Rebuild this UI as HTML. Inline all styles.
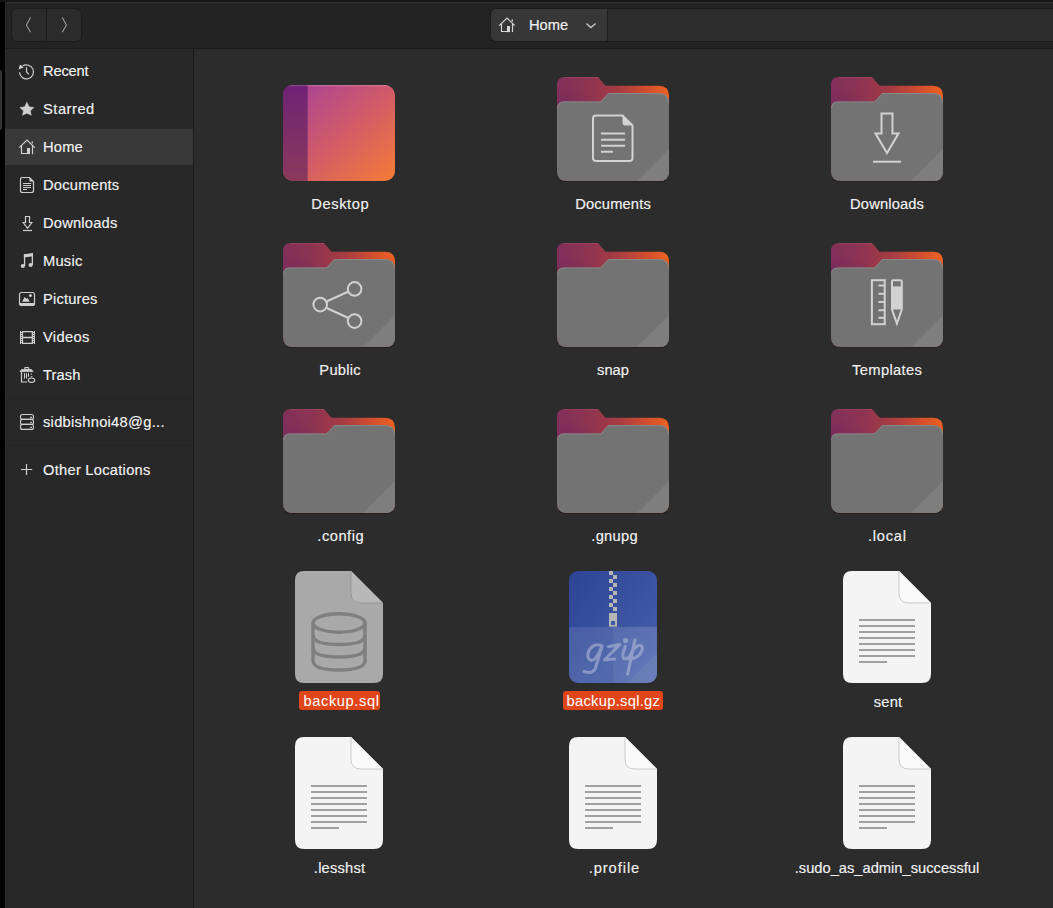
<!DOCTYPE html><html><head><meta charset="utf-8"><style>
*{margin:0;padding:0;box-sizing:border-box}
html,body{width:1053px;height:908px;overflow:hidden;background:#000;font-family:"Liberation Sans",sans-serif}
.a{position:absolute}
.t{position:absolute;white-space:nowrap;color:#f2f2f2;font-size:14.7px;line-height:20px;-webkit-text-stroke:0.15px #f2f2f2}
svg{position:absolute;overflow:visible}
</style></head><body><div class="a" style="left:0;top:0;width:1053px;height:2px;background:#161616"></div>
<div class="a" style="left:0;top:70px;width:2px;height:60px;background:#333;border-radius:0 2px 2px 0"></div>
<div class="a" style="left:5px;top:2px;width:1048px;height:1px;background:#2f2f2f"></div>
<div class="a" style="left:5px;top:3px;width:1048px;height:45px;background:#232323"></div>
<div class="a" style="left:5px;top:48px;width:1048px;height:1px;background:#191919"></div>
<div class="a" style="left:5px;top:49px;width:188px;height:859px;background:#282828"></div>
<div class="a" style="left:193px;top:49px;width:1px;height:859px;background:#1c1c1c"></div>
<div class="a" style="left:194px;top:49px;width:859px;height:859px;background:#2c2c2c"></div>
<div class="a" style="left:11px;top:8px;width:71px;height:34px;border:1px solid #1b1b1b;border-radius:6px;background:#2b2b2b"></div>
<div class="a" style="left:46px;top:9px;width:1px;height:32px;background:#1b1b1b"></div>
<svg style="left:0;top:0" width="100" height="48"><path d="M30.5 17.6 L26.4 25 L30.5 32.2" fill="none" stroke="#9c9c9c" stroke-width="1.1"/><path d="M62.3 17.6 L66.4 25 L62.3 32.2" fill="none" stroke="#9c9c9c" stroke-width="1.1"/></svg>
<div class="a" style="left:490px;top:8px;width:563px;height:34px;border-top:1px solid #1b1b1b;border-bottom:1px solid #1b1b1b;border-left:1px solid #1b1b1b;border-radius:6px 0 0 6px;background:#2d2d2d"></div>
<div class="a" style="left:491px;top:9px;width:116px;height:32px;border-radius:5px 0 0 5px;background:#373737"></div>
<div class="a" style="left:607px;top:9px;width:1px;height:32px;background:#1f1f1f"></div>
<svg style="left:497px;top:15px" width="20" height="20" viewBox="0 0 20 20"><path d="M2.2 10.6 L10 3 L17.8 10.6" fill="none" stroke="#d6d6d6" stroke-width="1.2"/><path d="M4.5 8.6 V16.5 H10.5" fill="none" stroke="#d6d6d6" stroke-width="1.2"/><rect x="10" y="11" width="3" height="6.1" fill="#d6d6d6"/><path d="M15.5 8.8 V17.1" stroke="#d6d6d6" stroke-width="1.2"/><path d="M15.3 4.6 V6.6" stroke="#d6d6d6" stroke-width="1.3"/></svg>
<div class="t" style="left:529px;top:15px;color:#f2f2f2">Home</div>
<svg style="left:0;top:0" width="620" height="48"><path d="M586.4 23.4 L590.9 27.6 L595.6 23.4" fill="none" stroke="#c8c8c8" stroke-width="1.3"/></svg>
<div class="a" style="left:5px;top:129px;width:188px;height:36px;background:#393939"></div>
<div class="a" style="left:5px;top:398px;width:188px;height:1px;background:#242424"></div>
<div class="a" style="left:5px;top:445px;width:188px;height:1px;background:#242424"></div>
<div class="t" style="left:43px;top:61px;letter-spacing:-0.18px">Recent</div>
<div class="t" style="left:43px;top:99px;letter-spacing:0.52px">Starred</div>
<div class="t" style="left:43px;top:137px;letter-spacing:0.20px">Home</div>
<div class="t" style="left:43px;top:175px;letter-spacing:0.24px">Documents</div>
<div class="t" style="left:43px;top:213px;letter-spacing:0.20px">Downloads</div>
<div class="t" style="left:43px;top:251px;letter-spacing:0.22px">Music</div>
<div class="t" style="left:43px;top:289px;letter-spacing:0.19px">Pictures</div>
<div class="t" style="left:43px;top:327px;letter-spacing:0.32px">Videos</div>
<div class="t" style="left:43px;top:365px;letter-spacing:0.08px">Trash</div>
<div class="t" style="left:43px;top:412px;letter-spacing:0.28px">sidbishnoi48@g...</div>
<div class="t" style="left:43px;top:460px;letter-spacing:0.26px">Other Locations</div>
<svg style="left:17px;top:61px" width="20" height="20" viewBox="0 0 20 20"><path d="M5.6 5.1 A7 7 0 1 1 2.5 11.3" fill="none" stroke="#cfcfcf" stroke-width="1.2"/><path d="M1.5 8.4 L3.0 3.5 L6.6 6.5 Z" fill="#cfcfcf"/><path d="M9.5 6.2 V11 L11.8 13.3" fill="none" stroke="#cfcfcf" stroke-width="1.2"/></svg>
<svg style="left:17px;top:99px" width="20" height="20" viewBox="0 0 20 20"><path d="M9.9 3.1 L12.1 7.7 L17.1 8.4 L13.4 11.8 L14.3 16.3 L9.9 14.2 L5.5 16.3 L6.4 11.8 L2.7 8.4 L7.7 7.7 Z" fill="#cfcfcf" stroke="#cfcfcf" stroke-width="0.4" stroke-linejoin="round"/></svg>
<svg style="left:17px;top:137px" width="20" height="20" viewBox="0 0 20 20"><path d="M2.2 10.6 L10 3 L17.8 10.6" fill="none" stroke="#cfcfcf" stroke-width="1.2"/><path d="M4.5 8.6 V16.5 H10.5" fill="none" stroke="#cfcfcf" stroke-width="1.2"/><rect x="10" y="11" width="3" height="6.1" fill="#cfcfcf"/><path d="M15.5 8.8 V17.1" stroke="#cfcfcf" stroke-width="1.2"/><path d="M15.3 4.6 V6.6" stroke="#cfcfcf" stroke-width="1.3"/></svg>
<svg style="left:17px;top:175px" width="20" height="20" viewBox="0 0 20 20"><path d="M5.5 2.5 H12.5 L16.5 6.5 V15.5 Q16.5 17.5 14.5 17.5 H5.5 Q3.5 17.5 3.5 15.5 V4.5 Q3.5 2.5 5.5 2.5 Z" fill="none" stroke="#cfcfcf" stroke-width="1.2"/><path d="M12.5 2.5 L16.5 6.5 H12.5 Z" fill="#cfcfcf"/><path d="M6 8.5 H14 M6 10.5 H14 M6 12.5 H14 M6 14.5 H10" stroke="#cfcfcf" stroke-width="1"/></svg>
<svg style="left:17px;top:213px" width="20" height="20" viewBox="0 0 20 20"><path d="M8.5 3.5 H12.5 V9.5 H14.8 L10.5 15.3 L6.2 9.5 H8.5 Z" fill="none" stroke="#cfcfcf" stroke-width="1.2"/><path d="M6 17.5 H15" stroke="#cfcfcf" stroke-width="1.2"/></svg>
<svg style="left:17px;top:251px" width="20" height="20" viewBox="0 0 20 20"><path d="M6.9 3.3 L16 2 V5.3 L6.9 6.5 Z" fill="#cfcfcf"/><rect x="6.9" y="3.3" width="1.3" height="11.7" fill="#cfcfcf"/><rect x="14.7" y="2" width="1.3" height="12" fill="#cfcfcf"/><circle cx="5.8" cy="15" r="2.1" fill="#cfcfcf"/><circle cx="13.6" cy="14" r="2.1" fill="#cfcfcf"/></svg>
<svg style="left:17px;top:289px" width="20" height="20" viewBox="0 0 20 20"><rect x="2.5" y="3.5" width="15" height="13" rx="2" fill="none" stroke="#cfcfcf" stroke-width="1.2"/><path d="M2.5 14 H17.5 V15 Q17.5 17 15.5 17 H4.5 Q2.5 17 2.5 15 Z" fill="#cfcfcf"/><path d="M5 12.8 L7.7 8 L9.4 9.8 L10.6 8.9 L12.9 12.8 Z" fill="#cfcfcf"/><circle cx="13.4" cy="6.5" r="1.5" fill="#cfcfcf"/></svg>
<svg style="left:17px;top:327px" width="20" height="20" viewBox="0 0 20 20"><path fill-rule="evenodd" d="M3 4 H18 V17 H3 Z M6.1 5.2 H14.7 V9.8 H6.1 Z M6.1 11.2 H14.7 V15.8 H6.1 Z" fill="#cfcfcf"/><circle cx="4.5" cy="6.5" r="0.55" fill="#282828"/><circle cx="16.5" cy="6.5" r="0.55" fill="#282828"/><circle cx="4.5" cy="8.5" r="0.55" fill="#282828"/><circle cx="16.5" cy="8.5" r="0.55" fill="#282828"/><circle cx="4.5" cy="10.5" r="0.55" fill="#282828"/><circle cx="16.5" cy="10.5" r="0.55" fill="#282828"/><circle cx="4.5" cy="12.5" r="0.55" fill="#282828"/><circle cx="16.5" cy="12.5" r="0.55" fill="#282828"/><circle cx="4.5" cy="14.5" r="0.55" fill="#282828"/><circle cx="16.5" cy="14.5" r="0.55" fill="#282828"/><rect x="4" y="4" width="1" height="0.9" fill="#282828"/><rect x="16" y="4" width="1" height="0.9" fill="#282828"/><rect x="4" y="16.1" width="1" height="0.9" fill="#282828"/><rect x="16" y="16.1" width="1" height="0.9" fill="#282828"/></svg>
<svg style="left:17px;top:365px" width="20" height="20" viewBox="0 0 20 20"><path d="M2.9 6.6 L4.5 4.6 H14.5 L16.1 6.6 Z" fill="#cfcfcf" stroke="#cfcfcf" stroke-width="0.8" stroke-linejoin="round"/><rect x="7.7" y="2.6" width="4.1" height="2.2" rx="0.9" fill="none" stroke="#cfcfcf" stroke-width="1.1"/><path d="M4.5 6.8 V17 H10" fill="none" stroke="#cfcfcf" stroke-width="1.2"/><path d="M7.5 8.2 V13.5 M9.5 8.2 V13.5 M11.5 8.2 V11.8 M14.4 8.4 V9.8" stroke="#cfcfcf" stroke-width="1.1"/><path d="M13.3 11.3 H15.8 L14.55 12.6 Z" fill="#cfcfcf"/><ellipse cx="14.5" cy="15.2" rx="3.2" ry="2.2" fill="none" stroke="#cfcfcf" stroke-width="1.1"/></svg>
<svg style="left:17px;top:412px" width="20" height="20" viewBox="0 0 20 20"><rect x="3.5" y="2.5" width="13" height="4.9" rx="2" fill="none" stroke="#cfcfcf" stroke-width="1.1"/><rect x="3.5" y="7.4" width="13" height="5" rx="2" fill="none" stroke="#cfcfcf" stroke-width="1.1"/><rect x="3.5" y="12.4" width="13" height="5" rx="2" fill="none" stroke="#cfcfcf" stroke-width="1.1"/><path d="M13.2 5.4 H14.9 M13.2 10.4 H14.9 M13.2 15.4 H14.9" stroke="#cfcfcf" stroke-width="1.1"/></svg>
<svg style="left:17px;top:460px" width="20" height="20" viewBox="0 0 20 20"><path d="M9.5 4 V15 M4 9.5 H15.2" stroke="#cfcfcf" stroke-width="1.2"/></svg>
<svg style="left:275px;top:65px" width="128" height="128" viewBox="0 0 128 128"><defs><linearGradient id="tabg" x1="0" y1="0" x2="1" y2="0"><stop offset="0" stop-color="#80305a"/><stop offset="0.3" stop-color="#8f3450"/><stop offset="0.55" stop-color="#a83c42"/><stop offset="0.8" stop-color="#d24e2e"/><stop offset="1" stop-color="#ee6222"/></linearGradient><radialGradient id="tabr" cx="0.1" cy="0.4" r="0.3"><stop offset="0" stop-color="#6e2462" stop-opacity="0.55"/><stop offset="1" stop-color="#6a2060" stop-opacity="0"/></radialGradient></defs><defs><linearGradient id="dskg" x1="0" y1="0" x2="1" y2="1"><stop offset="0" stop-color="#a3409d"/><stop offset="0.5" stop-color="#d05a6a"/><stop offset="1" stop-color="#f47c36"/></linearGradient><linearGradient id="dskl" x1="0" y1="0" x2="0" y2="1"><stop offset="0" stop-color="#6f2275"/><stop offset="1" stop-color="#8a3a5c"/></linearGradient><clipPath id="dskc"><rect x="8" y="20" width="112" height="96" rx="10"/></clipPath></defs><g clip-path="url(#dskc)"><rect x="8" y="20" width="112" height="96" fill="url(#dskg)"/><rect x="8" y="20" width="24.7" height="96" fill="url(#dskl)"/><rect x="8" y="20" width="112" height="1.2" fill="#ffffff" opacity="0.18"/></g></svg>
<div class="t" style="left:140.29px;top:194px;width:400px;text-align:center;letter-spacing:0.58px">Desktop</div>
<svg style="left:549px;top:65px" width="128" height="128" viewBox="0 0 128 128"><defs><linearGradient id="tabg" x1="0" y1="0" x2="1" y2="0"><stop offset="0" stop-color="#80305a"/><stop offset="0.3" stop-color="#8f3450"/><stop offset="0.55" stop-color="#a83c42"/><stop offset="0.8" stop-color="#d24e2e"/><stop offset="1" stop-color="#ee6222"/></linearGradient><radialGradient id="tabr" cx="0.1" cy="0.4" r="0.3"><stop offset="0" stop-color="#6e2462" stop-opacity="0.55"/><stop offset="1" stop-color="#6a2060" stop-opacity="0"/></radialGradient></defs><path d="M18 116.2 H110 Q116 116.2 118 114" fill="none" stroke="#141414" stroke-opacity="0.45" stroke-width="1.6"/><path d="M10 114 Q12 116.2 18 116.2" fill="none" stroke="#141414" stroke-opacity="0.45" stroke-width="1.6"/><path d="M16 12 H49 L56.5 20.7 H110 Q120 20.7 120 30.7 V106 Q120 116 110 116 H18 Q8 116 8 106 V20 Q8 12 16 12 Z" fill="url(#tabg)"/><path d="M16 12 H49 L56.5 20.7 H110 Q120 20.7 120 30.7 V106 Q120 116 110 116 H18 Q8 116 8 106 V20 Q8 12 16 12 Z" fill="url(#tabr)"/><path d="M15 12.5 H49" stroke="#d07090" stroke-opacity="0.22" stroke-width="1"/><path d="M15 36.4 H51.5 L59.3 28.1 H110 Q120 28.1 120 38.1 V106 Q120 116 110 116 H18 Q8 116 8 106 V43.4 Q8 36.4 15 36.4 Z" fill="#737373"/><path d="M120 84 V106 Q120 116 110 116 H88 Z" fill="#7e7e7e"/><path d="M16 115.6 H112" stroke="#9a7060" stroke-opacity="0.3" stroke-width="0.8"/><path d="M8.5 43 Q8.5 36.9 15 36.9 H51.7 L59.5 28.6 H110 Q119.5 28.6 119.5 38" fill="none" stroke="#9a9a9a" stroke-opacity="0.55" stroke-width="1"/><path d="M47 50.5 H73.5 L83.5 60.5 V93 Q83.5 96 80.5 96 H47 Q44 96 44 93 V53.5 Q44 50.5 47 50.5 Z" fill="none" stroke="#d2d2d2" stroke-width="2"/><path d="M73.5 50.5 L83.5 60.5 H76.5 Q73.5 60.5 73.5 57.5 Z" fill="#d2d2d2"/><path d="M52 68.6 H76 M52 74.7 H76 M52 80.8 H76 M52 86.8 H64" stroke="#d2d2d2" stroke-width="2"/></svg>
<div class="t" style="left:413.08px;top:194px;width:400px;text-align:center;letter-spacing:0.16px">Documents</div>
<svg style="left:823px;top:65px" width="128" height="128" viewBox="0 0 128 128"><defs><linearGradient id="tabg" x1="0" y1="0" x2="1" y2="0"><stop offset="0" stop-color="#80305a"/><stop offset="0.3" stop-color="#8f3450"/><stop offset="0.55" stop-color="#a83c42"/><stop offset="0.8" stop-color="#d24e2e"/><stop offset="1" stop-color="#ee6222"/></linearGradient><radialGradient id="tabr" cx="0.1" cy="0.4" r="0.3"><stop offset="0" stop-color="#6e2462" stop-opacity="0.55"/><stop offset="1" stop-color="#6a2060" stop-opacity="0"/></radialGradient></defs><path d="M18 116.2 H110 Q116 116.2 118 114" fill="none" stroke="#141414" stroke-opacity="0.45" stroke-width="1.6"/><path d="M10 114 Q12 116.2 18 116.2" fill="none" stroke="#141414" stroke-opacity="0.45" stroke-width="1.6"/><path d="M16 12 H49 L56.5 20.7 H110 Q120 20.7 120 30.7 V106 Q120 116 110 116 H18 Q8 116 8 106 V20 Q8 12 16 12 Z" fill="url(#tabg)"/><path d="M16 12 H49 L56.5 20.7 H110 Q120 20.7 120 30.7 V106 Q120 116 110 116 H18 Q8 116 8 106 V20 Q8 12 16 12 Z" fill="url(#tabr)"/><path d="M15 12.5 H49" stroke="#d07090" stroke-opacity="0.22" stroke-width="1"/><path d="M15 36.4 H51.5 L59.3 28.1 H110 Q120 28.1 120 38.1 V106 Q120 116 110 116 H18 Q8 116 8 106 V43.4 Q8 36.4 15 36.4 Z" fill="#737373"/><path d="M120 84 V106 Q120 116 110 116 H88 Z" fill="#7e7e7e"/><path d="M16 115.6 H112" stroke="#9a7060" stroke-opacity="0.3" stroke-width="0.8"/><path d="M8.5 43 Q8.5 36.9 15 36.9 H51.7 L59.5 28.6 H110 Q119.5 28.6 119.5 38" fill="none" stroke="#9a9a9a" stroke-opacity="0.55" stroke-width="1"/><path d="M58.5 48.5 H69.5 V68.5 H75.5 L64 88 L52.5 68.5 H58.5 Z" fill="none" stroke="#d2d2d2" stroke-width="2" stroke-linejoin="miter"/><path d="M50 96.7 H78" stroke="#d2d2d2" stroke-width="2"/></svg>
<div class="t" style="left:687.08px;top:194px;width:400px;text-align:center;letter-spacing:0.15px">Downloads</div>
<svg style="left:275px;top:231px" width="128" height="128" viewBox="0 0 128 128"><defs><linearGradient id="tabg" x1="0" y1="0" x2="1" y2="0"><stop offset="0" stop-color="#80305a"/><stop offset="0.3" stop-color="#8f3450"/><stop offset="0.55" stop-color="#a83c42"/><stop offset="0.8" stop-color="#d24e2e"/><stop offset="1" stop-color="#ee6222"/></linearGradient><radialGradient id="tabr" cx="0.1" cy="0.4" r="0.3"><stop offset="0" stop-color="#6e2462" stop-opacity="0.55"/><stop offset="1" stop-color="#6a2060" stop-opacity="0"/></radialGradient></defs><path d="M18 116.2 H110 Q116 116.2 118 114" fill="none" stroke="#141414" stroke-opacity="0.45" stroke-width="1.6"/><path d="M10 114 Q12 116.2 18 116.2" fill="none" stroke="#141414" stroke-opacity="0.45" stroke-width="1.6"/><path d="M16 12 H49 L56.5 20.7 H110 Q120 20.7 120 30.7 V106 Q120 116 110 116 H18 Q8 116 8 106 V20 Q8 12 16 12 Z" fill="url(#tabg)"/><path d="M16 12 H49 L56.5 20.7 H110 Q120 20.7 120 30.7 V106 Q120 116 110 116 H18 Q8 116 8 106 V20 Q8 12 16 12 Z" fill="url(#tabr)"/><path d="M15 12.5 H49" stroke="#d07090" stroke-opacity="0.22" stroke-width="1"/><path d="M15 36.4 H51.5 L59.3 28.1 H110 Q120 28.1 120 38.1 V106 Q120 116 110 116 H18 Q8 116 8 106 V43.4 Q8 36.4 15 36.4 Z" fill="#737373"/><path d="M120 84 V106 Q120 116 110 116 H88 Z" fill="#7e7e7e"/><path d="M16 115.6 H112" stroke="#9a7060" stroke-opacity="0.3" stroke-width="0.8"/><path d="M8.5 43 Q8.5 36.9 15 36.9 H51.7 L59.5 28.6 H110 Q119.5 28.6 119.5 38" fill="none" stroke="#9a9a9a" stroke-opacity="0.55" stroke-width="1"/><circle cx="45.2" cy="73.6" r="6.8" fill="none" stroke="#d2d2d2" stroke-width="2"/><circle cx="79.6" cy="57.9" r="6.8" fill="none" stroke="#d2d2d2" stroke-width="2"/><circle cx="79.6" cy="90.1" r="6.8" fill="none" stroke="#d2d2d2" stroke-width="2"/><path d="M51.5 70.5 L73.5 60.5 M51.5 77 L73.5 87" stroke="#d2d2d2" stroke-width="2"/></svg>
<div class="t" style="left:140.13px;top:360px;width:400px;text-align:center;letter-spacing:0.26px">Public</div>
<svg style="left:549px;top:231px" width="128" height="128" viewBox="0 0 128 128"><defs><linearGradient id="tabg" x1="0" y1="0" x2="1" y2="0"><stop offset="0" stop-color="#80305a"/><stop offset="0.3" stop-color="#8f3450"/><stop offset="0.55" stop-color="#a83c42"/><stop offset="0.8" stop-color="#d24e2e"/><stop offset="1" stop-color="#ee6222"/></linearGradient><radialGradient id="tabr" cx="0.1" cy="0.4" r="0.3"><stop offset="0" stop-color="#6e2462" stop-opacity="0.55"/><stop offset="1" stop-color="#6a2060" stop-opacity="0"/></radialGradient></defs><path d="M18 116.2 H110 Q116 116.2 118 114" fill="none" stroke="#141414" stroke-opacity="0.45" stroke-width="1.6"/><path d="M10 114 Q12 116.2 18 116.2" fill="none" stroke="#141414" stroke-opacity="0.45" stroke-width="1.6"/><path d="M16 12 H49 L56.5 20.7 H110 Q120 20.7 120 30.7 V106 Q120 116 110 116 H18 Q8 116 8 106 V20 Q8 12 16 12 Z" fill="url(#tabg)"/><path d="M16 12 H49 L56.5 20.7 H110 Q120 20.7 120 30.7 V106 Q120 116 110 116 H18 Q8 116 8 106 V20 Q8 12 16 12 Z" fill="url(#tabr)"/><path d="M15 12.5 H49" stroke="#d07090" stroke-opacity="0.22" stroke-width="1"/><path d="M15 36.4 H51.5 L59.3 28.1 H110 Q120 28.1 120 38.1 V106 Q120 116 110 116 H18 Q8 116 8 106 V43.4 Q8 36.4 15 36.4 Z" fill="#737373"/><path d="M120 84 V106 Q120 116 110 116 H88 Z" fill="#7e7e7e"/><path d="M16 115.6 H112" stroke="#9a7060" stroke-opacity="0.3" stroke-width="0.8"/><path d="M8.5 43 Q8.5 36.9 15 36.9 H51.7 L59.5 28.6 H110 Q119.5 28.6 119.5 38" fill="none" stroke="#9a9a9a" stroke-opacity="0.55" stroke-width="1"/></svg>
<div class="t" style="left:413.00px;top:360px;width:400px;text-align:center;letter-spacing:0.00px">snap</div>
<svg style="left:823px;top:231px" width="128" height="128" viewBox="0 0 128 128"><defs><linearGradient id="tabg" x1="0" y1="0" x2="1" y2="0"><stop offset="0" stop-color="#80305a"/><stop offset="0.3" stop-color="#8f3450"/><stop offset="0.55" stop-color="#a83c42"/><stop offset="0.8" stop-color="#d24e2e"/><stop offset="1" stop-color="#ee6222"/></linearGradient><radialGradient id="tabr" cx="0.1" cy="0.4" r="0.3"><stop offset="0" stop-color="#6e2462" stop-opacity="0.55"/><stop offset="1" stop-color="#6a2060" stop-opacity="0"/></radialGradient></defs><path d="M18 116.2 H110 Q116 116.2 118 114" fill="none" stroke="#141414" stroke-opacity="0.45" stroke-width="1.6"/><path d="M10 114 Q12 116.2 18 116.2" fill="none" stroke="#141414" stroke-opacity="0.45" stroke-width="1.6"/><path d="M16 12 H49 L56.5 20.7 H110 Q120 20.7 120 30.7 V106 Q120 116 110 116 H18 Q8 116 8 106 V20 Q8 12 16 12 Z" fill="url(#tabg)"/><path d="M16 12 H49 L56.5 20.7 H110 Q120 20.7 120 30.7 V106 Q120 116 110 116 H18 Q8 116 8 106 V20 Q8 12 16 12 Z" fill="url(#tabr)"/><path d="M15 12.5 H49" stroke="#d07090" stroke-opacity="0.22" stroke-width="1"/><path d="M15 36.4 H51.5 L59.3 28.1 H110 Q120 28.1 120 38.1 V106 Q120 116 110 116 H18 Q8 116 8 106 V43.4 Q8 36.4 15 36.4 Z" fill="#737373"/><path d="M120 84 V106 Q120 116 110 116 H88 Z" fill="#7e7e7e"/><path d="M16 115.6 H112" stroke="#9a7060" stroke-opacity="0.3" stroke-width="0.8"/><path d="M8.5 43 Q8.5 36.9 15 36.9 H51.7 L59.5 28.6 H110 Q119.5 28.6 119.5 38" fill="none" stroke="#9a9a9a" stroke-opacity="0.55" stroke-width="1"/><rect x="48.9" y="49.2" width="12.8" height="44" fill="none" stroke="#d2d2d2" stroke-width="2"/><path d="M55.5 54.6 H61 M55.5 62.8 H61 M55.5 71.1 H61 M55.5 79.3 H61 M55.5 86.8 H61" stroke="#d2d2d2" stroke-width="2"/><path d="M69 50.5 Q69 49.2 70.3 49.2 H77.5 Q78.8 49.2 78.8 50.5 V78.5 L73.9 92.5 L69 78.5 Z" fill="none" stroke="#d2d2d2" stroke-width="2"/><rect x="69" y="55.4" width="9.8" height="23.1" fill="#d2d2d2"/></svg>
<div class="t" style="left:687.18px;top:360px;width:400px;text-align:center;letter-spacing:0.36px">Templates</div>
<svg style="left:275px;top:397px" width="128" height="128" viewBox="0 0 128 128"><defs><linearGradient id="tabg" x1="0" y1="0" x2="1" y2="0"><stop offset="0" stop-color="#80305a"/><stop offset="0.3" stop-color="#8f3450"/><stop offset="0.55" stop-color="#a83c42"/><stop offset="0.8" stop-color="#d24e2e"/><stop offset="1" stop-color="#ee6222"/></linearGradient><radialGradient id="tabr" cx="0.1" cy="0.4" r="0.3"><stop offset="0" stop-color="#6e2462" stop-opacity="0.55"/><stop offset="1" stop-color="#6a2060" stop-opacity="0"/></radialGradient></defs><path d="M18 116.2 H110 Q116 116.2 118 114" fill="none" stroke="#141414" stroke-opacity="0.45" stroke-width="1.6"/><path d="M10 114 Q12 116.2 18 116.2" fill="none" stroke="#141414" stroke-opacity="0.45" stroke-width="1.6"/><path d="M16 12 H49 L56.5 20.7 H110 Q120 20.7 120 30.7 V106 Q120 116 110 116 H18 Q8 116 8 106 V20 Q8 12 16 12 Z" fill="url(#tabg)"/><path d="M16 12 H49 L56.5 20.7 H110 Q120 20.7 120 30.7 V106 Q120 116 110 116 H18 Q8 116 8 106 V20 Q8 12 16 12 Z" fill="url(#tabr)"/><path d="M15 12.5 H49" stroke="#d07090" stroke-opacity="0.22" stroke-width="1"/><path d="M15 36.4 H51.5 L59.3 28.1 H110 Q120 28.1 120 38.1 V106 Q120 116 110 116 H18 Q8 116 8 106 V43.4 Q8 36.4 15 36.4 Z" fill="#737373"/><path d="M120 84 V106 Q120 116 110 116 H88 Z" fill="#7e7e7e"/><path d="M16 115.6 H112" stroke="#9a7060" stroke-opacity="0.3" stroke-width="0.8"/><path d="M8.5 43 Q8.5 36.9 15 36.9 H51.7 L59.5 28.6 H110 Q119.5 28.6 119.5 38" fill="none" stroke="#9a9a9a" stroke-opacity="0.55" stroke-width="1"/></svg>
<div class="t" style="left:140.75px;top:526px;width:400px;text-align:center;letter-spacing:0.50px">.config</div>
<svg style="left:549px;top:397px" width="128" height="128" viewBox="0 0 128 128"><defs><linearGradient id="tabg" x1="0" y1="0" x2="1" y2="0"><stop offset="0" stop-color="#80305a"/><stop offset="0.3" stop-color="#8f3450"/><stop offset="0.55" stop-color="#a83c42"/><stop offset="0.8" stop-color="#d24e2e"/><stop offset="1" stop-color="#ee6222"/></linearGradient><radialGradient id="tabr" cx="0.1" cy="0.4" r="0.3"><stop offset="0" stop-color="#6e2462" stop-opacity="0.55"/><stop offset="1" stop-color="#6a2060" stop-opacity="0"/></radialGradient></defs><path d="M18 116.2 H110 Q116 116.2 118 114" fill="none" stroke="#141414" stroke-opacity="0.45" stroke-width="1.6"/><path d="M10 114 Q12 116.2 18 116.2" fill="none" stroke="#141414" stroke-opacity="0.45" stroke-width="1.6"/><path d="M16 12 H49 L56.5 20.7 H110 Q120 20.7 120 30.7 V106 Q120 116 110 116 H18 Q8 116 8 106 V20 Q8 12 16 12 Z" fill="url(#tabg)"/><path d="M16 12 H49 L56.5 20.7 H110 Q120 20.7 120 30.7 V106 Q120 116 110 116 H18 Q8 116 8 106 V20 Q8 12 16 12 Z" fill="url(#tabr)"/><path d="M15 12.5 H49" stroke="#d07090" stroke-opacity="0.22" stroke-width="1"/><path d="M15 36.4 H51.5 L59.3 28.1 H110 Q120 28.1 120 38.1 V106 Q120 116 110 116 H18 Q8 116 8 106 V43.4 Q8 36.4 15 36.4 Z" fill="#737373"/><path d="M120 84 V106 Q120 116 110 116 H88 Z" fill="#7e7e7e"/><path d="M16 115.6 H112" stroke="#9a7060" stroke-opacity="0.3" stroke-width="0.8"/><path d="M8.5 43 Q8.5 36.9 15 36.9 H51.7 L59.5 28.6 H110 Q119.5 28.6 119.5 38" fill="none" stroke="#9a9a9a" stroke-opacity="0.55" stroke-width="1"/></svg>
<div class="t" style="left:414.66px;top:526px;width:400px;text-align:center;letter-spacing:0.32px">.gnupg</div>
<svg style="left:823px;top:397px" width="128" height="128" viewBox="0 0 128 128"><defs><linearGradient id="tabg" x1="0" y1="0" x2="1" y2="0"><stop offset="0" stop-color="#80305a"/><stop offset="0.3" stop-color="#8f3450"/><stop offset="0.55" stop-color="#a83c42"/><stop offset="0.8" stop-color="#d24e2e"/><stop offset="1" stop-color="#ee6222"/></linearGradient><radialGradient id="tabr" cx="0.1" cy="0.4" r="0.3"><stop offset="0" stop-color="#6e2462" stop-opacity="0.55"/><stop offset="1" stop-color="#6a2060" stop-opacity="0"/></radialGradient></defs><path d="M18 116.2 H110 Q116 116.2 118 114" fill="none" stroke="#141414" stroke-opacity="0.45" stroke-width="1.6"/><path d="M10 114 Q12 116.2 18 116.2" fill="none" stroke="#141414" stroke-opacity="0.45" stroke-width="1.6"/><path d="M16 12 H49 L56.5 20.7 H110 Q120 20.7 120 30.7 V106 Q120 116 110 116 H18 Q8 116 8 106 V20 Q8 12 16 12 Z" fill="url(#tabg)"/><path d="M16 12 H49 L56.5 20.7 H110 Q120 20.7 120 30.7 V106 Q120 116 110 116 H18 Q8 116 8 106 V20 Q8 12 16 12 Z" fill="url(#tabr)"/><path d="M15 12.5 H49" stroke="#d07090" stroke-opacity="0.22" stroke-width="1"/><path d="M15 36.4 H51.5 L59.3 28.1 H110 Q120 28.1 120 38.1 V106 Q120 116 110 116 H18 Q8 116 8 106 V43.4 Q8 36.4 15 36.4 Z" fill="#737373"/><path d="M120 84 V106 Q120 116 110 116 H88 Z" fill="#7e7e7e"/><path d="M16 115.6 H112" stroke="#9a7060" stroke-opacity="0.3" stroke-width="0.8"/><path d="M8.5 43 Q8.5 36.9 15 36.9 H51.7 L59.5 28.6 H110 Q119.5 28.6 119.5 38" fill="none" stroke="#9a9a9a" stroke-opacity="0.55" stroke-width="1"/></svg>
<div class="t" style="left:687.38px;top:526px;width:400px;text-align:center;letter-spacing:0.76px">.local</div>
<svg style="left:275px;top:563px" width="128" height="128" viewBox="0 0 128 128"><path d="M29 8 H76 L108 40 V111 Q108 120 99 120 H29 Q20 120 20 111 V17 Q20 8 29 8 Z" fill="#a9a9a9"/><path d="M76 8 L108 40 H86 Q76 40 76 30 Z" fill="#b8b8b8"/><path d="M76 8.5 V30 Q76 40 86 40 H107.5" fill="none" stroke="#8a8a8a" stroke-opacity="0.7" stroke-width="0.9"/><ellipse cx="64" cy="60" rx="26" ry="9.2" fill="none" stroke="#7f7f7f" stroke-width="3.4"/><path d="M38 60 V97.5 Q38 107 64 107 Q90 107 90 97.5 V60" fill="none" stroke="#7f7f7f" stroke-width="3.4"/><path d="M38 72.3 Q38 81.5 64 81.5 Q90 81.5 90 72.3 M38 84.8 Q38 94 64 94 Q90 94 90 84.8" fill="none" stroke="#7f7f7f" stroke-width="3.4"/></svg>
<div class="a" style="left:299px;top:691px;width:81px;height:19px;background:#e1461a;border-radius:3px"></div>
<div class="a" style="left:303.5px;top:691px;height:19px;line-height:21px;color:#fff;font-size:14.7px;white-space:nowrap;letter-spacing:0.58px">backup.sql</div>
<svg style="left:549px;top:563px" width="128" height="128" viewBox="0 0 128 128"><defs><linearGradient id="gzg" x1="0" y1="0" x2="1" y2="1"><stop offset="0" stop-color="#2b4495"/><stop offset="1" stop-color="#4a62ab"/></linearGradient><clipPath id="gzc"><rect x="20" y="8" width="88" height="112" rx="9"/></clipPath></defs><g clip-path="url(#gzc)"><rect x="20" y="8" width="88" height="112" fill="url(#gzg)"/><rect x="20" y="64" width="88" height="56" fill="#ffffff" opacity="0.1"/><rect x="64" y="64" width="44" height="56" fill="#ffffff" opacity="0.05"/><path d="M108 90 V120 H78 Z" fill="#fff" opacity="0.05"/></g><rect x="60" y="8" width="4" height="4" fill="#b5b5b5"/><rect x="60" y="16" width="4" height="4" fill="#b5b5b5"/><rect x="60" y="24" width="4" height="4" fill="#b5b5b5"/><rect x="60" y="32" width="4" height="4" fill="#b5b5b5"/><rect x="60" y="40" width="4" height="4" fill="#b5b5b5"/><rect x="64" y="12" width="4" height="4" fill="#b5b5b5"/><rect x="64" y="20" width="4" height="4" fill="#b5b5b5"/><rect x="64" y="28" width="4" height="4" fill="#b5b5b5"/><rect x="64" y="36" width="4" height="4" fill="#b5b5b5"/><rect x="64" y="44" width="4" height="4" fill="#b5b5b5"/><rect x="60" y="50" width="8" height="13.6" fill="#b5b5b5"/><rect x="62" y="58" width="4" height="4" fill="#3b58a4"/><g opacity="0.48"><path d="M53 83.3 C49 80, 42 82, 39.5 89 C37.5 95, 41 99, 45 96.5 C48 94, 51 88, 53 83.3" stroke="#c4cbe0" stroke-width="3.1" fill="none" stroke-linecap="round" stroke-linejoin="round"/><path d="M53 83.3 L46.5 105 C45 109, 41 110.5, 35 108.5" stroke="#c4cbe0" stroke-width="3.1" fill="none" stroke-linecap="round" stroke-linejoin="round"/><path d="M59.4 83.8 L70.6 81.6 L55.5 97 L65.5 96" stroke="#c4cbe0" stroke-width="3.1" fill="none" stroke-linecap="round" stroke-linejoin="round"/><path d="M76.2 83.5 C74.5 88, 73 93, 74.5 95 C76 97, 79 95, 81 93" stroke="#c4cbe0" stroke-width="3.1" fill="none" stroke-linecap="round" stroke-linejoin="round"/><circle cx="76.6" cy="77.6" r="2.6" fill="#c4cbe0"/><path d="M86 76.8 L78.6 111" stroke="#c4cbe0" stroke-width="3.1" fill="none" stroke-linecap="round" stroke-linejoin="round"/><path d="M80.7 93.6 C83 87, 89 80, 92.5 83 C95 86, 91 96, 79.5 96" stroke="#c4cbe0" stroke-width="3.1" fill="none" stroke-linecap="round" stroke-linejoin="round"/></g></svg>
<div class="a" style="left:563px;top:691px;width:100px;height:19px;background:#e1461a;border-radius:3px"></div>
<div class="a" style="left:566.5px;top:691px;height:19px;line-height:21px;color:#fff;font-size:14.7px;white-space:nowrap;letter-spacing:0.30px">backup.sql.gz</div>
<svg style="left:823px;top:563px" width="128" height="128" viewBox="0 0 128 128"><path d="M29 8 H76 L108 40 V111 Q108 120 99 120 H29 Q20 120 20 111 V17 Q20 8 29 8 Z" fill="#f4f4f4"/><path d="M76 8 L108 40 H86 Q76 40 76 30 Z" fill="#fafafa"/><path d="M76 8.5 V30 Q76 40 86 40 H107.5" fill="none" stroke="#b0b0b0" stroke-opacity="0.7" stroke-width="0.9"/><rect x="36" y="56" width="56" height="2" fill="#a0a0a0"/><rect x="36" y="62" width="56" height="2" fill="#a0a0a0"/><rect x="36" y="68" width="56" height="2" fill="#a0a0a0"/><rect x="36" y="74" width="56" height="2" fill="#a0a0a0"/><rect x="36" y="80" width="56" height="2" fill="#a0a0a0"/><rect x="36" y="86" width="56" height="2" fill="#a0a0a0"/><rect x="36" y="92" width="56" height="2" fill="#a0a0a0"/><rect x="36" y="98" width="28" height="2" fill="#a0a0a0"/></svg>
<div class="t" style="left:688.09px;top:692px;width:400px;text-align:center;letter-spacing:0.17px">sent</div>
<svg style="left:275px;top:729px" width="128" height="128" viewBox="0 0 128 128"><path d="M29 8 H76 L108 40 V111 Q108 120 99 120 H29 Q20 120 20 111 V17 Q20 8 29 8 Z" fill="#f4f4f4"/><path d="M76 8 L108 40 H86 Q76 40 76 30 Z" fill="#fafafa"/><path d="M76 8.5 V30 Q76 40 86 40 H107.5" fill="none" stroke="#b0b0b0" stroke-opacity="0.7" stroke-width="0.9"/><rect x="36" y="56" width="56" height="2" fill="#a0a0a0"/><rect x="36" y="62" width="56" height="2" fill="#a0a0a0"/><rect x="36" y="68" width="56" height="2" fill="#a0a0a0"/><rect x="36" y="74" width="56" height="2" fill="#a0a0a0"/><rect x="36" y="80" width="56" height="2" fill="#a0a0a0"/><rect x="36" y="86" width="56" height="2" fill="#a0a0a0"/><rect x="36" y="92" width="56" height="2" fill="#a0a0a0"/><rect x="36" y="98" width="28" height="2" fill="#a0a0a0"/></svg>
<div class="t" style="left:139.60px;top:858px;width:400px;text-align:center;letter-spacing:0.21px">.lesshst</div>
<svg style="left:549px;top:729px" width="128" height="128" viewBox="0 0 128 128"><path d="M29 8 H76 L108 40 V111 Q108 120 99 120 H29 Q20 120 20 111 V17 Q20 8 29 8 Z" fill="#f4f4f4"/><path d="M76 8 L108 40 H86 Q76 40 76 30 Z" fill="#fafafa"/><path d="M76 8.5 V30 Q76 40 86 40 H107.5" fill="none" stroke="#b0b0b0" stroke-opacity="0.7" stroke-width="0.9"/><rect x="36" y="56" width="56" height="2" fill="#a0a0a0"/><rect x="36" y="62" width="56" height="2" fill="#a0a0a0"/><rect x="36" y="68" width="56" height="2" fill="#a0a0a0"/><rect x="36" y="74" width="56" height="2" fill="#a0a0a0"/><rect x="36" y="80" width="56" height="2" fill="#a0a0a0"/><rect x="36" y="86" width="56" height="2" fill="#a0a0a0"/><rect x="36" y="92" width="56" height="2" fill="#a0a0a0"/><rect x="36" y="98" width="28" height="2" fill="#a0a0a0"/></svg>
<div class="t" style="left:414.46px;top:858px;width:400px;text-align:center;letter-spacing:0.93px">.profile</div>
<svg style="left:823px;top:729px" width="128" height="128" viewBox="0 0 128 128"><path d="M29 8 H76 L108 40 V111 Q108 120 99 120 H29 Q20 120 20 111 V17 Q20 8 29 8 Z" fill="#f4f4f4"/><path d="M76 8 L108 40 H86 Q76 40 76 30 Z" fill="#fafafa"/><path d="M76 8.5 V30 Q76 40 86 40 H107.5" fill="none" stroke="#b0b0b0" stroke-opacity="0.7" stroke-width="0.9"/><rect x="36" y="56" width="56" height="2" fill="#a0a0a0"/><rect x="36" y="62" width="56" height="2" fill="#a0a0a0"/><rect x="36" y="68" width="56" height="2" fill="#a0a0a0"/><rect x="36" y="74" width="56" height="2" fill="#a0a0a0"/><rect x="36" y="80" width="56" height="2" fill="#a0a0a0"/><rect x="36" y="86" width="56" height="2" fill="#a0a0a0"/><rect x="36" y="92" width="56" height="2" fill="#a0a0a0"/><rect x="36" y="98" width="28" height="2" fill="#a0a0a0"/></svg>
<div class="t" style="left:687.00px;top:858px;width:400px;text-align:center;letter-spacing:0.00px">.sudo_as_admin_successful</div></body></html>
